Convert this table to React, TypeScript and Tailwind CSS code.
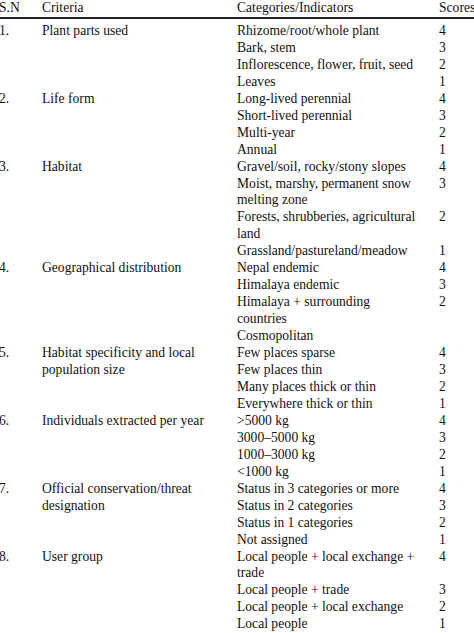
const groups: { n: string; criteria: string[]; items: { label: string[]; score: string }[] }[] = [
  {
    n: '1.',
    criteria: ['Plant parts used'],
    items: [
      { label: ['Rhizome/root/whole plant'], score: '4' },
      { label: ['Bark, stem'], score: '3' },
      { label: ['Inflorescence, flower, fruit, seed'], score: '2' },
      { label: ['Leaves'], score: '1' },
    ],
  },
  {
    n: '2.',
    criteria: ['Life form'],
    items: [
      { label: ['Long-lived perennial'], score: '4' },
      { label: ['Short-lived perennial'], score: '3' },
      { label: ['Multi-year'], score: '2' },
      { label: ['Annual'], score: '1' },
    ],
  },
  {
    n: '3.',
    criteria: ['Habitat'],
    items: [
      { label: ['Gravel/soil, rocky/stony slopes'], score: '4' },
      { label: ['Moist, marshy, permanent snow', 'melting zone'], score: '3' },
      { label: ['Forests, shrubberies, agricultural', 'land'], score: '2' },
      { label: ['Grassland/pastureland/meadow'], score: '1' },
    ],
  },
  {
    n: '4.',
    criteria: ['Geographical distribution'],
    items: [
      { label: ['Nepal endemic'], score: '4' },
      { label: ['Himalaya endemic'], score: '3' },
      { label: ['Himalaya + surrounding', 'countries'], score: '2' },
      { label: ['Cosmopolitan'], score: '' },
    ],
  },
  {
    n: '5.',
    criteria: ['Habitat specificity and local', 'population size'],
    items: [
      { label: ['Few places sparse'], score: '4' },
      { label: ['Few places thin'], score: '3' },
      { label: ['Many places thick or thin'], score: '2' },
      { label: ['Everywhere thick or thin'], score: '1' },
    ],
  },
  {
    n: '6.',
    criteria: ['Individuals extracted per year'],
    items: [
      { label: ['>5000 kg'], score: '4' },
      { label: ['3000–5000 kg'], score: '3' },
      { label: ['1000–3000 kg'], score: '2' },
      { label: ['<1000 kg'], score: '1' },
    ],
  },
  {
    n: '7.',
    criteria: ['Official conservation/threat', 'designation'],
    items: [
      { label: ['Status in 3 categories or more'], score: '4' },
      { label: ['Status in 2 categories'], score: '3' },
      { label: ['Status in 1 categories'], score: '2' },
      { label: ['Not assigned'], score: '1' },
    ],
  },
  {
    n: '8.',
    criteria: ['User group'],
    items: [
      { label: ['Local people + local exchange +', 'trade'], score: '4' },
      { label: ['Local people + trade'], score: '3' },
      { label: ['Local people + local exchange'], score: '2' },
      { label: ['Local people'], score: '1' },
    ],
  },
];

export default function App() {
  return (
    <div className="w-[474px] h-[633px] overflow-hidden bg-white text-[#111] font-['Liberation_Serif',serif] text-[13.6px] leading-[16.95px]">
      {/* Header */}
      <div className="border-b-2 border-[#222] grid grid-cols-[43px_195px_202px_1fr] -ml-[1px]">
        <div>S.N</div>
        <div>Criteria</div>
        <div>Categories/Indicators</div>
        <div className="whitespace-nowrap">Scores</div>
      </div>

      {/* Body */}
      <div className="pt-[4px] -ml-[1px]">
        {groups.map((g) => (
          <div key={g.n} className="grid grid-cols-[43px_195px_202px_1fr]">
            <div>{g.n}</div>
            <div>
              {g.criteria.map((c) => (
                <div key={c} className="whitespace-nowrap">{c}</div>
              ))}
            </div>
            <div className="col-span-2">
              {g.items.map((it) => (
                <div key={it.label[0]} className="grid grid-cols-[202px_1fr]">
                  <div>
                    {it.label.map((l) => (
                      <div key={l} className="whitespace-nowrap">{l}</div>
                    ))}
                  </div>
                  <div>{it.score}</div>
                </div>
              ))}
            </div>
          </div>
        ))}
      </div>
    </div>
  );
}
